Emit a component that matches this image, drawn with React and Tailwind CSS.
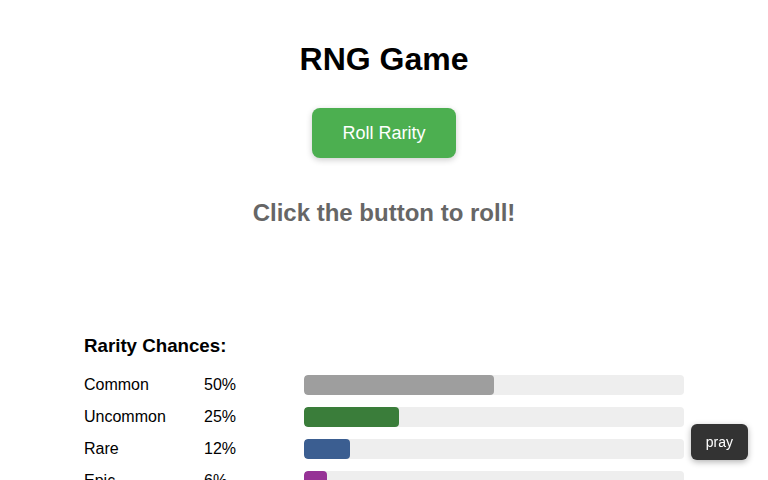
const rarities = [
  { name: 'Common', chance: 50, color: 'bg-[#9e9e9e]' },
  { name: 'Uncommon', chance: 25, color: 'bg-[#3a7d3a]' },
  { name: 'Rare', chance: 12, color: 'bg-[#3b5e91]' },
  { name: 'Epic', chance: 6, color: 'bg-[#963296]' },
  { name: 'Legendary', chance: 5, color: 'bg-[#f0a020]' },
  { name: 'Mythic', chance: 2, color: 'bg-[#d03030]' },
];

const App = () => {
  return (
    <div className="min-h-screen bg-white text-black font-['Liberation_Sans',Arial,sans-serif]">
      <div className="mx-auto w-[600px] pt-[41px] pb-10 flex flex-col">
        <h1 className="text-center text-[32px] leading-[37px] font-bold">RNG Game</h1>

        <div className="mt-[30px] flex justify-center">
          <button className="h-[50px] px-[30px] flex items-center rounded-lg bg-[#4caf50] text-white text-[18px] shadow-[0_2px_6px_rgba(0,0,0,0.2)]">
            Roll Rarity
          </button>
        </div>

        <p className="mt-[41px] text-center text-[24px] leading-[28px] font-bold text-[#666]">
          Click the button to roll!
        </p>

        <h3 className="mt-[108px] text-[18.72px] leading-[21.5px] font-bold">Rarity Chances:</h3>

        <div className="mt-[18px] flex flex-col gap-3">
          {rarities.map((r) => (
            <div key={r.name} className="flex items-center text-[16px] leading-[18px]">
              <span className="w-[120px]">{r.name}</span>
              <span className="w-[100px]">{r.chance}%</span>
              <div className="flex-1 h-5 rounded bg-[#eeeeee] overflow-hidden">
                <div className={`h-full rounded ${r.color}`} style={{ width: `${r.chance}%` }} />
              </div>
            </div>
          ))}
        </div>
      </div>

      <button className="fixed right-[20px] bottom-[20px] h-[36px] px-[15px] rounded-md bg-[#333] text-white text-[14px] shadow-[0_2px_6px_rgba(0,0,0,0.3)]">
        pray
      </button>
    </div>
  );
};

export default App;
